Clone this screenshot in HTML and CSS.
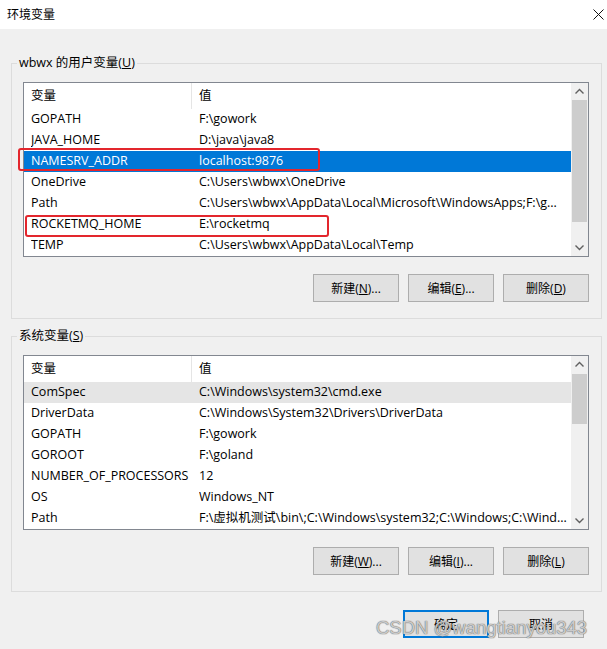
FILE: index.html
```html
<!DOCTYPE html>
<html lang="zh-CN">
<head>
    <meta charset="UTF-8">
    <title>环境变量</title>
    <link rel="stylesheet" href="styles.css">
</head>
<body>
    <div class="window">
        <div class="titlebar">
            <span>环境变量</span>
            <svg class="close" width="11" height="11" viewBox="0 0 11 11">
                <path d="M0.5 0.5 L10.5 10.5 M10.5 0.5 L0.5 10.5" stroke="#111" stroke-width="1"/>
            </svg>
        </div>

        <div class="content">
            <fieldset class="group">
                <legend>wbwx 的用户变量(<u>U</u>)</legend>
                <div class="list">
                    <div class="list-main">
                        <div class="list-head"><span>变量</span><span>值</span></div>
                        <div class="row"><span>GOPATH</span><span>F:\gowork</span></div>
                        <div class="row"><span>JAVA_HOME</span><span>D:\java\java8</span></div>
                        <div class="row selected"><span>NAMESRV_ADDR</span><span>localhost:9876</span></div>
                        <div class="row"><span>OneDrive</span><span>C:\Users\wbwx\OneDrive</span></div>
                        <div class="row"><span>Path</span><span>C:\Users\wbwx\AppData\Local\Microsoft\WindowsApps;F:\g...</span></div>
                        <div class="row"><span>ROCKETMQ_HOME</span><span>E:\rocketmq</span></div>
                        <div class="row"><span>TEMP</span><span>C:\Users\wbwx\AppData\Local\Temp</span></div>
                    </div>
                    <div class="scrollbar">
                        <svg class="arrow" width="17" height="17" viewBox="0 0 17 17"><polyline points="4.5,10.5 8.5,6.5 12.5,10.5" fill="none" stroke="#606060" stroke-width="1.4"/></svg>
                        <div class="track"><div class="thumb thumb-user"></div></div>
                        <svg class="arrow" width="17" height="17" viewBox="0 0 17 17"><polyline points="4.5,6.5 8.5,10.5 12.5,6.5" fill="none" stroke="#606060" stroke-width="1.4"/></svg>
                    </div>
                </div>
                <div class="buttons">
                    <button>新建(<u>N</u>)...</button>
                    <button>编辑(<u>E</u>)...</button>
                    <button>删除(<u>D</u>)</button>
                </div>
            </fieldset>

            <fieldset class="group group-system">
                <legend>系统变量(<u>S</u>)</legend>
                <div class="list">
                    <div class="list-main">
                        <div class="list-head"><span>变量</span><span>值</span></div>
                        <div class="row hover"><span>ComSpec</span><span>C:\Windows\system32\cmd.exe</span></div>
                        <div class="row"><span>DriverData</span><span>C:\Windows\System32\Drivers\DriverData</span></div>
                        <div class="row"><span>GOPATH</span><span>F:\gowork</span></div>
                        <div class="row"><span>GOROOT</span><span>F:\goland</span></div>
                        <div class="row"><span>NUMBER_OF_PROCESSORS</span><span>12</span></div>
                        <div class="row"><span>OS</span><span>Windows_NT</span></div>
                        <div class="row"><span>Path</span><span>F:\虚拟机测试\bin\;C:\Windows\system32;C:\Windows;C:\Wind...</span></div>
                    </div>
                    <div class="scrollbar">
                        <svg class="arrow" width="17" height="17" viewBox="0 0 17 17"><polyline points="4.5,10.5 8.5,6.5 12.5,10.5" fill="none" stroke="#606060" stroke-width="1.4"/></svg>
                        <div class="track"><div class="thumb thumb-system"></div></div>
                        <svg class="arrow" width="17" height="17" viewBox="0 0 17 17"><polyline points="4.5,6.5 8.5,10.5 12.5,6.5" fill="none" stroke="#606060" stroke-width="1.4"/></svg>
                    </div>
                </div>
                <div class="buttons">
                    <button>新建(<u>W</u>)...</button>
                    <button>编辑(<u>I</u>)...</button>
                    <button>删除(<u>L</u>)</button>
                </div>
            </fieldset>

            <div class="dialog-buttons">
                <button class="default">确定</button>
                <button>取消</button>
            </div>
        </div>

        <div class="mark mark-1"></div>
        <div class="mark mark-2"></div>
        <div class="watermark">CSDN @wangtianyou343</div>
    </div>
</body>
</html>
```

FILE: styles.css
```css
* { margin: 0; padding: 0; box-sizing: border-box; }
body { font-family: "Open Sans", "Noto Sans CJK SC", sans-serif; font-size: 12.5px; color: #000; background: #f0f0f0; }
.window { position: relative; width: 607px; height: 649px; overflow: hidden; background: #f0f0f0; }

.titlebar { height: 29px; background: #fff; display: flex; align-items: center; justify-content: space-between; padding: 0 3px 1px 7px; }
.titlebar span { font-size: 12px; }

.content { padding: 26px 5px 0 11px; }
.group { border: 1px solid #dcdcdc; padding: 11px 12px 16px 11px; }
.group legend { padding: 0 2px; margin-left: -6px; line-height: 16px; }
.group-system { margin-top: 9px; }

.list { height: 175px; border: 1px solid #828790; background: #fff; display: flex; overflow: hidden; }
.list-main { flex: 1; overflow: hidden; }
.list-head, .row { display: grid; grid-template-columns: 168px 1fr; padding-left: 7px; white-space: nowrap; }
.list-head { grid-template-columns: 161px 1fr; height: 26px; line-height: 25px; }
.list-head span:first-child { border-right: 1px solid #e5e5e5; }
.list-head span:last-child { padding-left: 7px; }
.row { height: 21px; line-height: 20px; }
.row span { overflow: hidden; }
.row.selected { background: #0078d7; color: #fff; }
.row.hover { background: #e5e5e5; }

.scrollbar { width: 17px; background: #f0f0f0; display: flex; flex-direction: column; }
.arrow { display: block; flex: none; }
.track { flex: 1; }
.thumb { margin: 0 1px; background: #cdcdcd; }
.thumb-user { height: 122px; }
.thumb-system { margin-top: 1px; height: 50px; }

.buttons { display: flex; justify-content: flex-end; gap: 9px; margin-top: 17px; }
button { width: 86px; height: 28px; background: #e1e1e1; border: 1px solid #adadad; font-family: inherit; font-size: 12px; color: #000; }
.dialog-buttons { display: flex; justify-content: flex-end; gap: 9px; margin-top: 18px; padding-right: 18px; }
button.default { border: 2px solid #0078d7; }

.mark { position: absolute; border: 2px solid #e3262d; border-radius: 3px; }
.mark-1 { left: 18px; top: 148px; width: 302px; height: 23px; }
.mark-2 { left: 25px; top: 215px; width: 304px; height: 22px; }

.watermark { position: absolute; left: 376px; top: 617px; font-family: "Liberation Sans", sans-serif; font-size: 18.5px; color: rgba(235, 235, 235, 0.75); text-shadow: 0 0 1px #666, 0 0 1px #666; white-space: nowrap; }
```
